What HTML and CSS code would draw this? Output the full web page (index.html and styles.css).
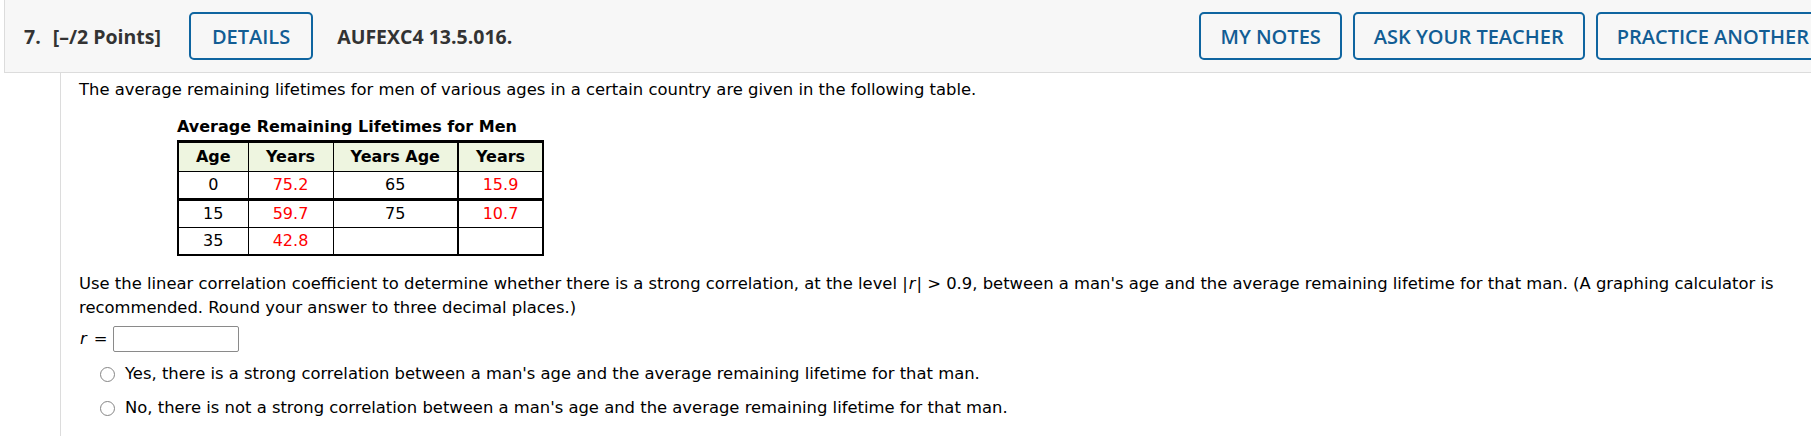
FILE: index.html
```html
<!DOCTYPE html>
<html>
<head>
<meta charset="utf-8">
<link rel="stylesheet" href="styles.css">
</head>
<body>
<div class="page">
  <div class="qhead">
    <span class="qnum">7.</span>
    <span class="qpts">[–/2 Points]</span>
    <button class="btn btn-details">DETAILS</button>
    <span class="qcode">AUFEXC4 13.5.016.</span>
    <div class="actions">
      <button class="btn">MY NOTES</button>
      <button class="btn">ASK YOUR TEACHER</button>
      <button class="btn">PRACTICE ANOTHER</button>
    </div>
  </div>
  <div class="qbody">
    <p class="intro">The average remaining lifetimes for men of various ages in a certain country are given in the following table.</p>
    <div class="tablewrap">
      <div class="tcaption">Average Remaining Lifetimes for Men</div>
      <table class="data">
        <colgroup>
          <col class="c1"><col class="c2"><col class="c3"><col class="c4">
        </colgroup>
        <tr class="hrow"><th>Age</th><th>Years</th><th class="split">Years Age</th><th>Years</th></tr>
        <tr class="r1"><td>0</td><td class="red">75.2</td><td class="split">65</td><td class="red">15.9</td></tr>
        <tr><td>15</td><td class="red">59.7</td><td class="split">75</td><td class="red">10.7</td></tr>
        <tr><td>35</td><td class="red">42.8</td><td class="split"></td><td></td></tr>
      </table>
    </div>
    <p class="prompt">Use the linear correlation coefficient to determine whether there is a strong correlation, at the level |<i class="var">r</i>| &gt; 0.9, between a man's age and the average remaining lifetime for that man. (A graphing calculator is recommended. Round your answer to three decimal places.)</p>
    <div class="answer"><i class="var">r</i><span class="eq">=</span><span class="field"></span></div>
    <ul class="choices">
      <li><span class="radio"></span>Yes, there is a strong correlation between a man's age and the average remaining lifetime for that man.</li>
      <li><span class="radio"></span>No, there is not a strong correlation between a man's age and the average remaining lifetime for that man.</li>
    </ul>
  </div>
</div>
</body>
</html>
```
FILE: styles.css
```css
html, body {
  margin: 0;
  padding: 0;
  background: #ffffff;
  overflow: hidden;
}
.page {
  padding-left: 4px;
  font-family: "DejaVu Sans", Verdana, sans-serif;
  color: #000;
}
.qhead {
  display: flex;
  align-items: center;
  box-sizing: border-box;
  width: 1836px;
  height: 73px;
  padding-left: 19px;
  padding-right: 10px;
  background: #f7f7f7;
  border-left: 1px solid #dcdcdc;
  border-bottom: 1px solid #dcdcdc;
  font-family: "Open Sans", sans-serif;
  font-weight: 700;
  font-size: 19.5px;
  color: #333333;
}
.qnum {
  margin-right: 12px;
}
.qpts {
  margin-right: 28px;
}
.qcode {
  margin-left: 24px;
}
.btn {
  flex-shrink: 0;
  height: 48px;
  padding: 0 19px;
  background: transparent;
  border: 2px solid #0f65a0;
  border-radius: 5px;
  font-family: "Open Sans", sans-serif;
  font-weight: 600;
  font-size: 20px;
  color: #125d94;
  white-space: nowrap;
}
.btn-details {
  padding: 0 21px;
}
.actions {
  margin-left: auto;
  display: flex;
  gap: 11px;
}
.qbody {
  margin-left: 56px;
  border-left: 1px solid #dcdcdc;
  padding: 5px 16px 30px 18px;
  font-size: 16.4px;
  line-height: 24px;
}
.intro {
  margin: 0;
}
.var {
  font-style: italic;
  padding: 0 1px;
}
.tablewrap {
  margin: 14px 0 0 98px;
}
.tcaption {
  font-weight: bold;
  font-size: 16px;
  line-height: 22px;
}
.data {
  border-collapse: collapse;
  table-layout: fixed;
  width: 365px;
  margin-top: 2px;
  font-size: 16px;
  border-top: 3px solid #000;
  border-left: 2px solid #000;
  border-right: 2px solid #000;
  border-bottom: 2px solid #000;
}
.c1 { width: 70px; }
.c2 { width: 85px; }
.c3 { width: 125px; }
.c4 { width: 85px; }
.data th, .data td {
  border: 1px solid #000;
  text-align: center;
  height: 26px;
  padding: 0;
  line-height: 20px;
}
.data th {
  background: #eef5e0;
  font-weight: bold;
  height: 28px;
}
.data .split {
  border-right: 2px solid #000;
}
.data .r1 td {
  border-bottom: 3px solid #000;
}
.red {
  color: #ff0000;
}
.prompt {
  margin: 16px 0 0 0;
}
.answer {
  display: flex;
  align-items: center;
  margin-top: 6px;
  height: 26px;
}
.eq {
  margin-left: 6px;
  margin-right: 6px;
}
.field {
  display: inline-block;
  box-sizing: border-box;
  width: 126px;
  height: 26px;
  border: 1px solid #8a8a8a;
  border-radius: 2px;
  background: #fff;
}
.choices {
  list-style: none;
  margin: 5px 0 0 0;
  padding: 0 0 0 21px;
}
.choices li {
  display: flex;
  align-items: center;
  height: 34px;
}
.radio {
  display: inline-block;
  box-sizing: border-box;
  width: 15px;
  height: 15px;
  border: 1.5px solid #858585;
  border-radius: 50%;
  background: #fff;
  margin-right: 10px;
  flex-shrink: 0;
}
```
